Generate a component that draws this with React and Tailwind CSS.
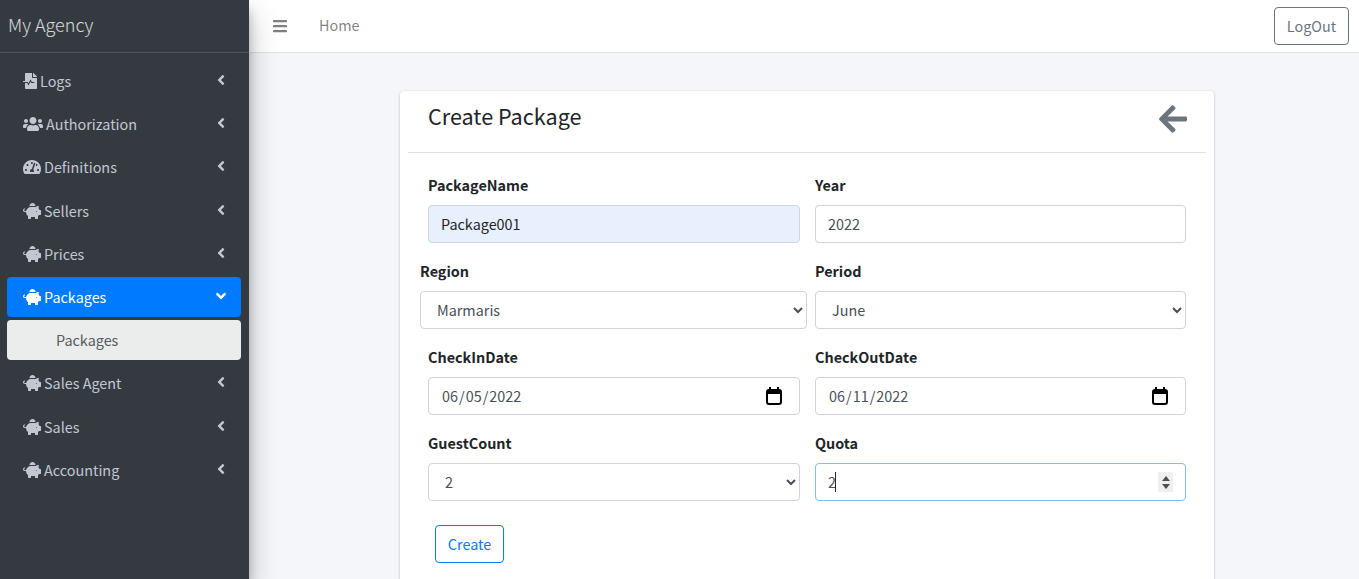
import React from 'react';
import { FaAngleDown, FaAngleLeft, FaArrowLeft, FaBars, FaFileMedicalAlt, FaPiggyBank, FaTachometerAlt, FaUsers } from 'react-icons/fa';

const menu = [
  { name: 'Logs', icon: FaFileMedicalAlt, size: 'w-[14px]' },
  { name: 'Authorization', icon: FaUsers, size: 'w-5' },
  { name: 'Definitions', icon: FaTachometerAlt, size: 'w-[18px]' },
  { name: 'Sellers', icon: FaPiggyBank, size: 'w-[18px]' },
  { name: 'Prices', icon: FaPiggyBank, size: 'w-[18px]' },
  { name: 'Packages', icon: FaPiggyBank, size: 'w-[18px]', open: true },
  { name: 'Sales Agent', icon: FaPiggyBank, size: 'w-[18px]' },
  { name: 'Sales', icon: FaPiggyBank, size: 'w-[18px]' },
  { name: 'Accounting', icon: FaPiggyBank, size: 'w-[18px]' },
];

const inputClass = 'block h-[38px] w-full rounded border px-3 text-[14.4px] outline-none';
const normalInput = `${inputClass} border-[#ced4da] bg-white text-[#495057]`;

const Field = ({ label, className = '', children }) => (
  <div className={`mb-4 ${className}`}>
    <label className="mb-2 block h-6 text-[14.4px] leading-6 font-bold text-[#212529]">{label}</label>
    {children}
  </div>
);

const DateInput = ({ value }) => (
  <div className="relative">
    <input type="date" className={`${normalInput} [&::-webkit-calendar-picker-indicator]:opacity-0`} defaultValue={value} />
    <svg className="pointer-events-none absolute top-[10px] right-[18px]" width="16" height="18" viewBox="0 0 16 18">
      <rect x="1" y="3" width="14" height="14" rx="2" fill="none" stroke="#000" strokeWidth="2" />
      <path d="M1 3h14v4H1z" fill="#000" />
      <path d="M3 0h2v3H3zM11 0h2v3h-2z" fill="#000" />
    </svg>
  </div>
);

const MenuItem = ({ item }) => {
  const Icon = item.icon;
  return (
    <>
      <a className={`mb-[3.2px] flex h-10 items-center rounded px-4 text-[14.4px] ${item.open ? 'bg-[#007bff] text-white' : 'text-[#c2c7d0]'}`}>
        <Icon className={`h-4 shrink-0 ${item.size}`} />
        <span className="ml-[3px] leading-6">{item.name}</span>
        <span className="ml-auto flex -translate-y-px justify-end">
          {item.open ? <FaAngleDown className="h-4 w-[10px] translate-x-px" /> : <FaAngleLeft className="h-4 w-2" />}
        </span>
      </a>
      {item.open && (
        <a className="mb-[3.2px] flex h-10 items-center rounded bg-[#ebecec] pl-[49px] text-[14.4px] text-[#545b62]">Packages</a>
      )}
    </>
  );
};

export default function App() {
  return (
    <div className="flex h-[579px] overflow-hidden bg-[#f4f6f9] font-['Noto_Sans_CJK_SC','Liberation_Sans',sans-serif] text-[14.4px]">
      <aside className="relative z-10 w-[249px] shrink-0 bg-[#343a40] shadow-[0_14px_28px_rgba(0,0,0,0.25),0_10px_10px_rgba(0,0,0,0.22)]">
        <div className="flex h-[53px] items-center border-b border-[#4b545c] pb-1 pl-2 text-lg font-light text-white/80">My Agency</div>
        <nav className="pt-2 pr-2 pl-[7px]">
          {menu.map((item) => (
            <MenuItem key={item.name} item={item} />
          ))}
        </nav>
      </aside>

      <div className="min-w-0 flex-1">
        <header className="flex h-[53px] items-center border-b border-[#dee2e6] bg-white pr-[10px] pl-6">
          <FaBars className="h-4 w-[14px] text-black/50" />
          <span className="ml-[32px] pb-0.5 text-black/50">Home</span>
          <button className="ml-auto h-[38px] w-[75px] rounded border border-[#6c757d] text-[#6c757d]">LogOut</button>
        </header>

        <main className="pt-[38px] pl-[151px]">
          <div className="w-[814px] rounded bg-white shadow-[0_0_1px_rgba(0,0,0,0.125),0_1px_3px_rgba(0,0,0,0.2)]">
            <div className="mx-2 flex h-[62px] items-center justify-between border-b border-[#dee2e6] pr-[19px] pl-5">
              <h3 className="-translate-y-[6px] text-[21.6px] leading-8 text-[#212529]">Create Package</h3>
              <FaArrowLeft className="h-8 w-7 -translate-y-[3px] text-[#6c757d]" />
            </div>

            <form className="pt-5 pb-10 pl-7">
              <div className="grid grid-cols-[372px_371px] gap-x-[15px]">
                <Field label="PackageName">
                  <input className={`${inputClass} border-[#ced4da] bg-[#e8f0fe] pb-0.5 text-[#212529]`} defaultValue="Package001" />
                </Field>
                <Field label="Year">
                  <input className={`${normalInput} pb-0.5`} defaultValue="2022" />
                </Field>
                <Field label="Region" className="-ml-2 w-[387px]">
                  <select className={`${normalInput} pb-0.5`} defaultValue="Marmaris">
                    <option>Marmaris</option>
                  </select>
                </Field>
                <Field label="Period">
                  <select className={`${normalInput} pb-0.5`} defaultValue="June">
                    <option>June</option>
                  </select>
                </Field>
                <Field label="CheckInDate">
                  <DateInput value="2022-06-05" />
                </Field>
                <Field label="CheckOutDate">
                  <DateInput value="2022-06-11" />
                </Field>
                <Field label="GuestCount">
                  <select className={`${normalInput} pb-0.5`} defaultValue="2">
                    <option>2</option>
                  </select>
                </Field>
                <Field label="Quota">
                  <div className="relative">
                    <input
                      type="number"
                      className={`${inputClass} border-[#80bdff] bg-white pb-0.5 text-[#495057] [appearance:textfield] [&::-webkit-inner-spin-button]:appearance-none`}
                      defaultValue="2"
                    />
                    {/* caret and spinner from the focused field */}
                    <span className="absolute top-[9px] left-5 h-5 w-px bg-[#212529]" />
                    <span className="absolute top-[9px] right-[13px] flex h-5 w-[15px] flex-col items-center justify-center gap-[3px] bg-[#f0f0f0]">
                      <span className="h-0 w-0 border-x-[4px] border-b-[5px] border-x-transparent border-b-[#505050]" />
                      <span className="h-0 w-0 border-x-[4px] border-t-[5px] border-x-transparent border-t-[#505050]" />
                    </span>
                  </div>
                </Field>
              </div>
              <button type="button" className="mt-2 ml-[7px] h-[38px] w-[69px] rounded border border-[#007bff] text-[#007bff]">Create</button>
            </form>
          </div>
        </main>
      </div>
    </div>
  );
}
